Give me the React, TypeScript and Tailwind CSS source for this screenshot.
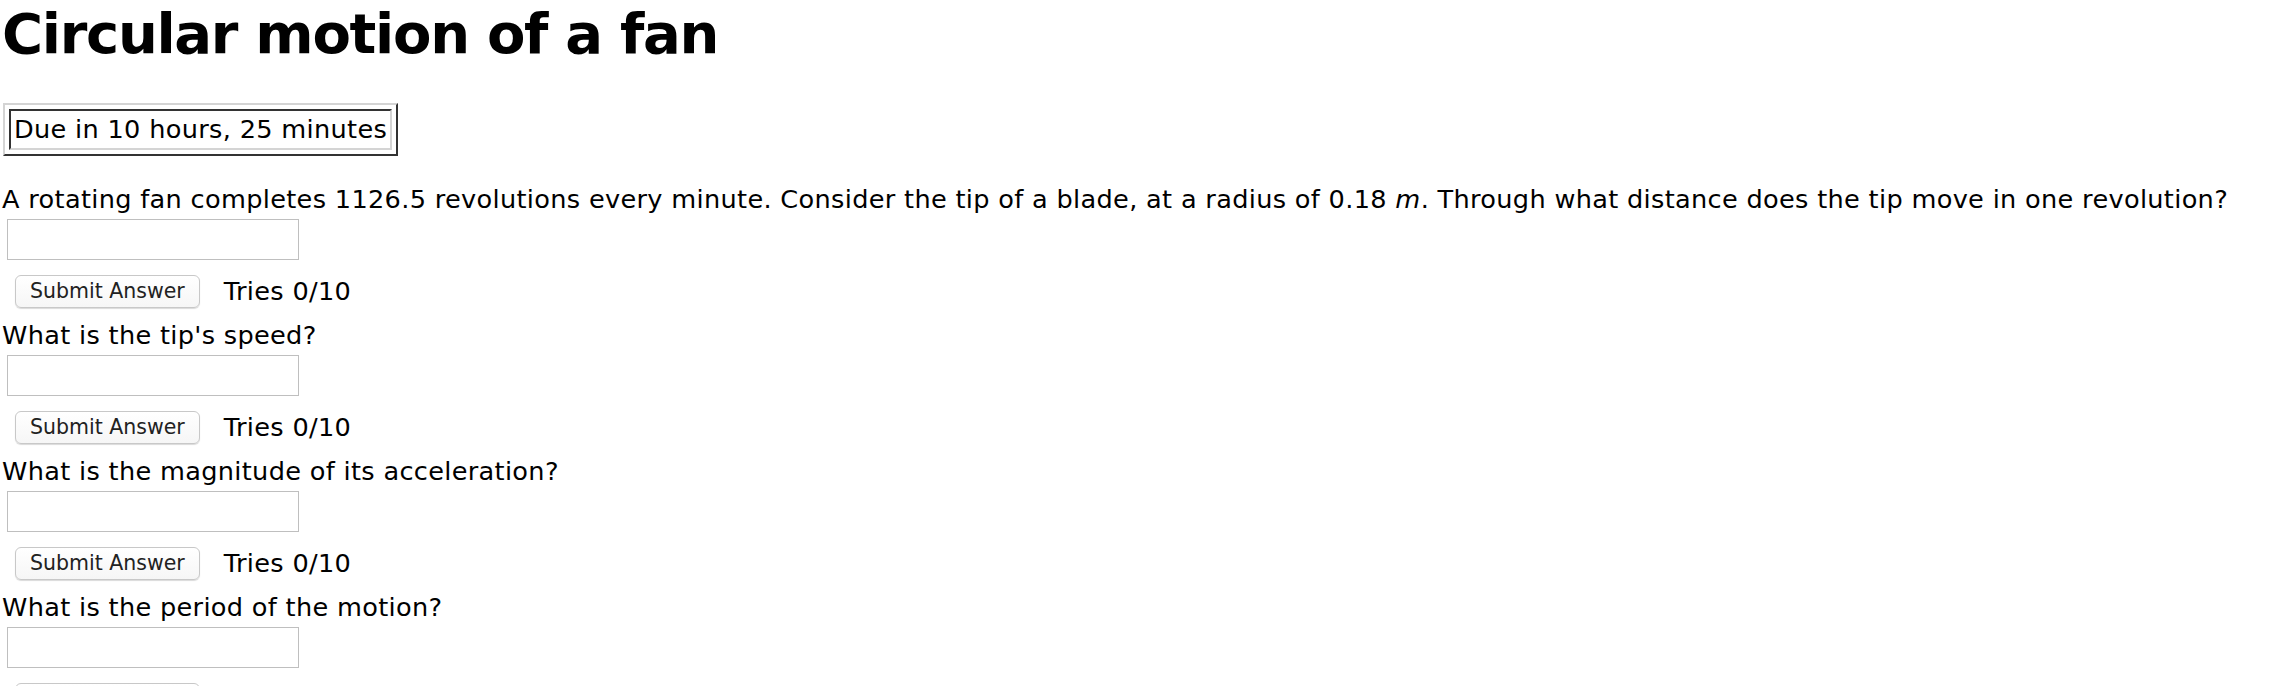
import React from 'react';

const questions = [
  'first',
  "What is the tip's speed?",
  'What is the magnitude of its acceleration?',
  'What is the period of the motion?',
];

const QuestionText = ({ q }: { q: string }) => {
  if (q === 'first') {
    return (
      <p className="leading-[31px] whitespace-nowrap">
        A rotating fan completes 1126.5 revolutions every minute. Consider the tip of a blade, at a radius of 0.18{' '}
        <i>m</i>. Through what distance does the tip move in one revolution?
      </p>
    );
  }
  return <p className="leading-[31px] whitespace-nowrap">{q}</p>;
};

export default function App() {
  return (
    <div
      className="min-h-screen bg-white text-black pl-[2px] text-[25.6px] tracking-[0.32px]"
      style={{ fontFamily: '"DejaVu Sans", Verdana, sans-serif' }}
    >
      <h1 className="text-[56px] font-bold leading-[67px] tracking-[-1.3px] m-0">Circular motion of a fan</h1>

      <div className="mt-[36px] ml-[1px] inline-block border-2 border-t-[#d4d4d4] border-l-[#d4d4d4] border-r-[#333333] border-b-[#333333] p-[4px]">
        <div className="border-2 border-t-[#333333] border-l-[#333333] border-r-[#d4d4d4] border-b-[#d4d4d4] px-[3px] py-[3px] leading-[31px]">
          Due in 10 hours, 25 minutes
        </div>
      </div>

      <div className="mt-[28px] flex flex-col">
        {questions.map((q, i) => (
          <div key={i} className="flex flex-col items-start mb-[12px]">
            <QuestionText q={q} />
            <input
              type="text"
              className="mt-[4px] ml-[5px] w-[292px] h-[41px] border border-[#bfbfbf] bg-white outline-none"
            />
            <div className="mt-[15px] ml-[13px] flex items-center gap-[24px]">
              <button
                type="button"
                className="h-[33px] px-[14px] rounded-[6px] border border-[#c8c8c8] bg-gradient-to-b from-white to-[#f6f6f6] shadow-[0_1px_1px_rgba(0,0,0,0.15)] text-[20.5px] tracking-normal text-[#222222] leading-none"
              >
                Submit Answer
              </button>
              <span className="leading-[31px]">Tries 0/10</span>
            </div>
          </div>
        ))}
      </div>
    </div>
  );
}
